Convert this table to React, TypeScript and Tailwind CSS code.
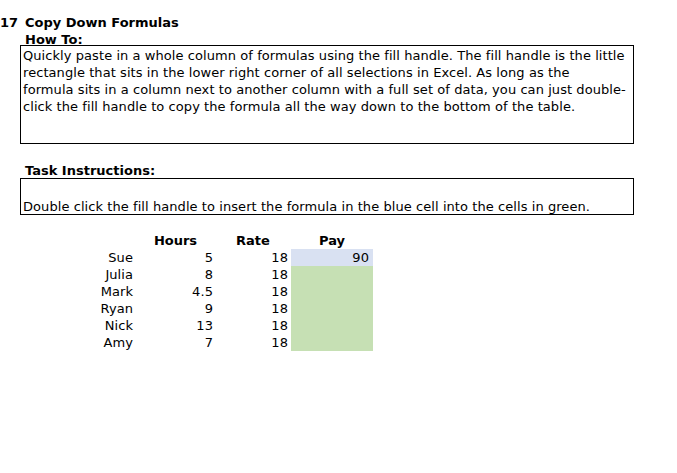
import React from 'react'

const rows = [
  { name: 'Sue', hours: '5', rate: '18', pay: '90' },
  { name: 'Julia', hours: '8', rate: '18', pay: '' },
  { name: 'Mark', hours: '4.5', rate: '18', pay: '' },
  { name: 'Ryan', hours: '9', rate: '18', pay: '' },
  { name: 'Nick', hours: '13', rate: '18', pay: '' },
  { name: 'Amy', hours: '7', rate: '18', pay: '' },
]

const howTo = [
  'Quickly paste in a whole column of formulas using the fill handle. The fill handle is the little',
  'rectangle that sits in the lower right corner of all selections in Excel. As long as the',
  'formula sits in a column next to another column with a full set of data, you can just double-',
  'click the fill handle to copy the formula all the way down to the bottom of the table.',
]

export default function App() {
  return (
    <div className="w-[677px] h-[473px] bg-white text-black font-['DejaVu_Sans',sans-serif] text-[13px] tracking-[0.07px] leading-[17px] pt-[14px] overflow-hidden">
      <div className="flex h-[17px] items-center font-bold tracking-normal">
        <span className="w-[25px]">17</span>
        <span>Copy Down Formulas</span>
      </div>
      <div className="h-[14px] pl-[25px] font-bold tracking-normal leading-[17px]">How To:</div>

      <div className="ml-[20px] w-[614px] h-[99px] border border-black pl-[2px] pt-[1px] whitespace-nowrap">
        {howTo.map((line) => (
          <div key={line} className="h-[17px]">
            {line}
          </div>
        ))}
      </div>

      <div className="mt-[18px] h-[16px] pl-[25px] font-bold tracking-normal leading-[17px]">Task Instructions:</div>
      <div className="ml-[20px] w-[614px] h-[37px] border border-black pl-[2px] flex items-end whitespace-nowrap overflow-hidden">
        <span className="leading-[14px]">Double click the fill handle to insert the formula in the blue cell into the cells in green.</span>
      </div>

      <div className="mt-[17px] ml-[72px]">
        <div className="flex h-[17px] font-bold tracking-normal">
          <div className="w-[64px]" />
          <div className="w-[79px] text-center">Hours</div>
          <div className="w-[76px] text-center">Rate</div>
          <div className="w-[82px] text-center">Pay</div>
        </div>
        {rows.map((r, i) => (
          <div key={r.name} className="flex h-[17px]">
            <div className="w-[64px] text-right pr-[3px]">{r.name}</div>
            <div className="w-[79px] text-right pr-[2px]">{r.hours}</div>
            <div className="w-[76px] text-right pr-[3px]">{r.rate}</div>
            <div className={`w-[82px] text-right pr-[4px] ${i === 0 ? 'bg-[#d9e1f2]' : 'bg-[#c6e0b4]'}`}>{r.pay}</div>
          </div>
        ))}
      </div>
    </div>
  )
}
